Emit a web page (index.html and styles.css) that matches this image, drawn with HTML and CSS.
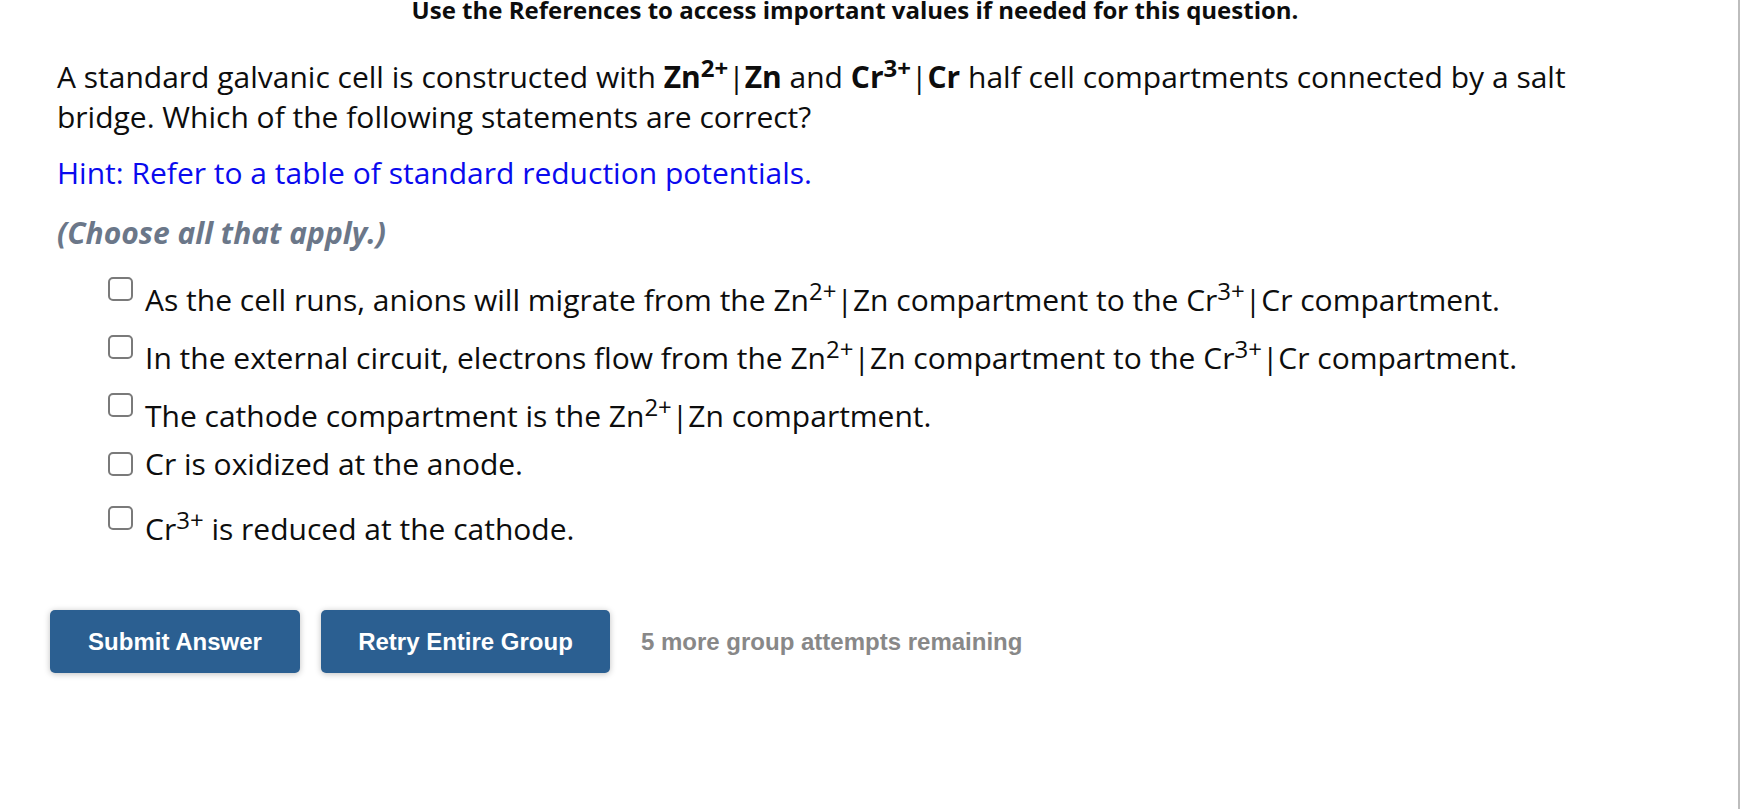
FILE: index.html
```html
<!DOCTYPE html>
<html lang="en">
<head>
<meta charset="utf-8">
<title>Galvanic cell question</title>
<link rel="stylesheet" href="styles.css">
</head>
<body>
<div class="page">
  <div class="refs">Use the References to access important values if needed for this question.</div>
  <div class="content">
    <p class="question">A standard galvanic cell is constructed with <b>Zn<sup>2+</sup></b>|<b>Zn</b> and <b>Cr<sup>3+</sup></b>|<b>Cr</b> half cell compartments connected by a salt bridge. Which of the following statements are correct?</p>
    <p class="hint">Hint: Refer to a table of standard reduction potentials.</p>
    <p class="choose">(Choose all that apply.)</p>
    <ul class="options">
      <li class="option"><span class="box"></span><span class="label has-sup">As the cell runs, anions will migrate from the Zn<sup>2+</sup>|Zn compartment to the Cr<sup>3+</sup>|Cr compartment.</span></li>
      <li class="option"><span class="box"></span><span class="label has-sup">In the external circuit, electrons flow from the Zn<sup>2+</sup>|Zn compartment to the Cr<sup>3+</sup>|Cr compartment.</span></li>
      <li class="option"><span class="box"></span><span class="label has-sup">The cathode compartment is the Zn<sup>2+</sup>|Zn compartment.</span></li>
      <li class="option"><span class="box"></span><span class="label">Cr is oxidized at the anode.</span></li>
      <li class="option last"><span class="box"></span><span class="label has-sup">Cr<sup>3+</sup> is reduced at the cathode.</span></li>
    </ul>
    <div class="actions">
      <button class="btn submit" type="button">Submit Answer</button>
      <button class="btn retry" type="button">Retry Entire Group</button>
      <span class="remaining">5 more group attempts remaining</span>
    </div>
  </div>
</div>
</body>
</html>
```
FILE: styles.css
```css
html, body {
  margin: 0;
  padding: 0;
  background: #ffffff;
}

.page {
  width: 1738px;
  height: 809px;
  border-right: 2px solid #bdbdbd;
  font-family: "Open Sans", "Noto Sans", sans-serif;
  color: #0d0d0d;
  overflow: hidden;
}

.refs {
  padding-right: 28px;
  text-align: center;
  font-weight: 700;
  font-size: 24px;
  line-height: 20px;
  height: 20px;
  color: #0d0d0d;
}

.content {
  padding-left: 57px;
  width: 1600px;
}

.question {
  margin: 37px 0 0 0;
  font-size: 30px;
  line-height: 40px;
}

.question b {
  font-weight: 700;
}

sup {
  font-size: 0.8em;
  line-height: 0;
  vertical-align: super;
}

.hint {
  margin: 16px 0 0 0;
  font-size: 30px;
  line-height: 40px;
  color: #0a0aee;
}

.choose {
  margin: 20px 0 0 0;
  font-size: 30px;
  line-height: 40px;
  font-weight: 700;
  font-style: italic;
  color: #6b7789;
}

.options {
  list-style: none;
  margin: 23.5px 0 0 51px;
  padding: 0;
}

.option {
  display: flex;
  align-items: flex-start;
  gap: 12px;
  margin-top: 23.4px;
}

.option:first-child {
  margin-top: 0;
}

.option.last {
  margin-top: 30px;
}

.box {
  flex: none;
  width: 21px;
  height: 20px;
  border: 2px solid #7a7a7a;
  border-radius: 5px;
  background: #ffffff;
}

.label {
  font-size: 30px;
  line-height: 24px;
}

.label.has-sup {
  padding-top: 11px;
}

.actions {
  display: flex;
  align-items: center;
  margin-top: 69.7px;
  margin-left: -7px;
}

.btn {
  height: 63px;
  border: none;
  border-radius: 5px;
  background: #2b5f91;
  color: #ffffff;
  font-family: "Liberation Sans", Arial, sans-serif;
  font-weight: 700;
  font-size: 24px;
  box-shadow: 0 1px 6px rgba(0, 0, 0, 0.25);
  padding: 0;
}

.submit {
  width: 250px;
}

.retry {
  width: 289px;
  margin-left: 21px;
}

.remaining {
  margin-left: 31px;
  font-family: "Liberation Sans", Arial, sans-serif;
  font-weight: 700;
  font-size: 24px;
  color: #888888;
}
```
